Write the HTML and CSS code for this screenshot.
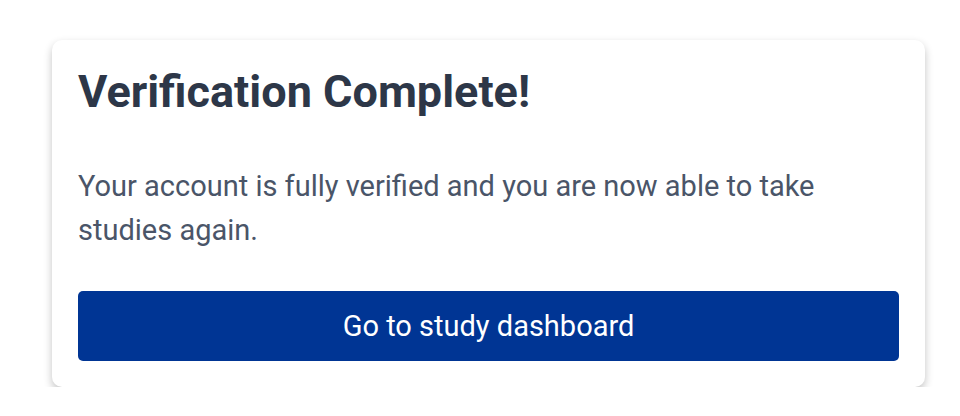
FILE: index.html
```html
<!DOCTYPE html>
<html lang="en">
<head>
    <meta charset="UTF-8">
    <meta name="viewport" content="width=device-width, initial-scale=1.0">
    <title>Verification Complete</title>
    <link rel="stylesheet" href="styles.css">
</head>
<body>

<div class="page">
    <div class="card">
        <h1>Verification Complete!</h1>
        <p>Your account is fully verified and you are now able to take studies again.</p>
        <button class="dashboard-button">Go to study dashboard</button>
    </div>
</div>

</body>
</html>
```

FILE: styles.css
```css
body {
    font-family: Roboto, "Noto Sans", Arial, sans-serif;
    margin: 0;
    padding: 0;
    background-color: #fff;
}
.page {
    padding: 40px 35px 0 52px;
}
.card {
    width: 873px;
    box-sizing: border-box;
    background-color: #fff;
    padding: 25px 26px 26px 26px;
    border-radius: 10px;
    box-shadow: 0 4px 9px rgba(0, 0, 0, 0.24);
}
h1 {
    margin: 0 0 46px 0;
    font-size: 45px;
    font-weight: 700;
    line-height: 53px;
    color: #2d3748;
}
p {
    margin: 0 0 39px 0;
    font-size: 29px;
    line-height: 44px;
    color: #4a5568;
}
.dashboard-button {
    display: block;
    width: 100%;
    height: 70px;
    padding: 0;
    font-family: inherit;
    font-size: 29px;
    font-weight: 400;
    color: #fff;
    background-color: #003594;
    border: none;
    border-radius: 5px;
    cursor: pointer;
}
```
